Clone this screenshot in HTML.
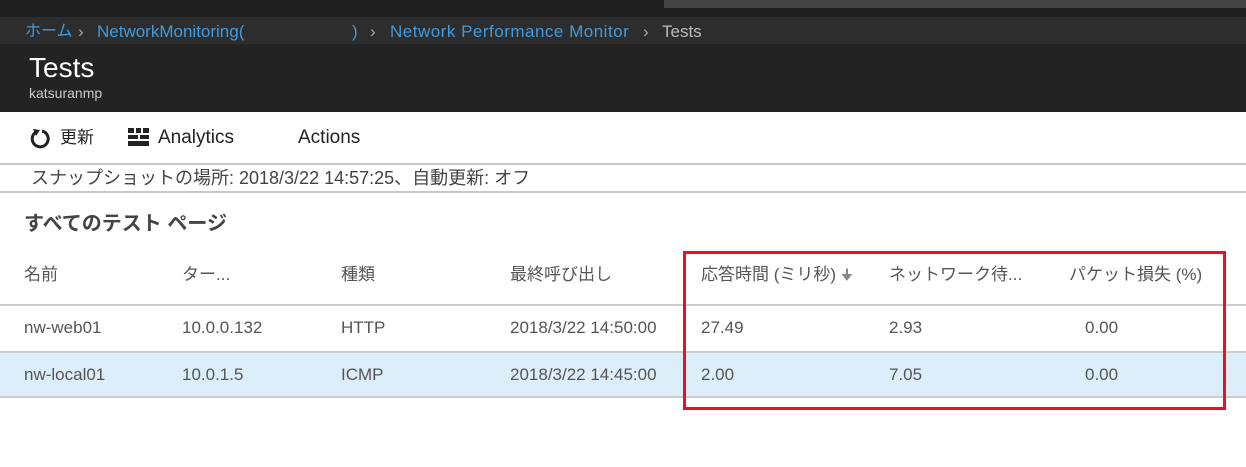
<!DOCTYPE html>
<html><head><meta charset="utf-8"><style>
*{margin:0;padding:0;box-sizing:border-box}
body{width:1246px;height:467px;background:#fff;position:relative;overflow:hidden;font-family:"Liberation Sans","Noto Sans CJK JP",sans-serif}
.a{position:absolute;white-space:nowrap;line-height:22px}
.hd{color:#555;font-size:17px;top:264px}
.c{color:#555;font-size:17px}
.b{position:absolute;top:21px;font-size:17px;line-height:22px;color:#3f9be0;white-space:nowrap}
</style></head><body>
<div class="a" style="left:0;top:0;width:1246px;height:17px;background:#1e1e1e"></div>
<div class="a" style="left:664px;top:0;width:582px;height:8px;background:#444"></div>
<div class="a" style="left:0;top:17px;width:1246px;height:27px;background:#2d2d2d"></div>
<div class="a" style="left:0;top:44px;width:1246px;height:68px;background:#232323"></div>
<div class="b" style="left:25px;font-size:16px">ホーム</div>
<div class="b" style="left:78px;color:#aaa">&#8250;</div>
<div class="b" style="left:97px">NetworkMonitoring(</div>
<div class="b" style="left:352px">)</div>
<div class="b" style="left:370px;color:#aaa">&#8250;</div>
<div class="b" style="left:390px;letter-spacing:0.5px">Network Performance Monitor</div>
<div class="b" style="left:643px;color:#aaa">&#8250;</div>
<div class="b" style="left:662px;color:#bbb">Tests</div>
<div class="a" style="left:29px;top:53px;font-size:28px;line-height:30px;color:#fff">Tests</div>
<div class="a" style="left:29px;top:82px;font-size:14px;color:#ccc">katsuranmp</div>
<svg class="a" style="left:29px;top:126px" width="22" height="24" viewBox="0 0 22 24"><path d="M7 6 A8 8 0 1 0 13 5" fill="none" stroke="#222" stroke-width="3"/><path d="M4 3 L11 4 L7 10 Z" fill="#222"/></svg>
<div class="a" style="left:60px;top:127px;font-size:17px;color:#222">更新</div>
<svg class="a" style="left:128px;top:128px" width="22" height="18"><rect x="0" y="0" width="6" height="5" fill="#222"/><rect x="8" y="0" width="5" height="5" fill="#222"/><rect x="15" y="0" width="6" height="5" fill="#222"/><rect x="0" y="7" width="10" height="4" fill="#222"/><rect x="12" y="7" width="9" height="4" fill="#222"/><rect x="0" y="13" width="21" height="5" fill="#222"/></svg>
<div class="a" style="left:158px;top:127px;font-size:19px;color:#222">Analytics</div>
<div class="a" style="left:298px;top:127px;font-size:19px;color:#222">Actions</div>
<div class="a" style="left:0;top:163px;width:1246px;height:2px;background:#c8c8c8"></div>
<div class="a" style="left:31px;top:167px;font-size:18px;color:#444">スナップショットの場所: 2018/3/22 14:57:25、自動更新: オフ</div>
<div class="a" style="left:0;top:191px;width:1246px;height:2px;background:#c8c8c8"></div>
<div class="a" style="left:24px;top:213px;font-size:20px;color:#444;font-weight:bold">すべてのテスト ページ</div>
<div class="a hd" style="left:24px">名前</div>
<div class="a hd" style="left:182px">ター...</div>
<div class="a hd" style="left:341px">種類</div>
<div class="a hd" style="left:510px">最終呼び出し</div>
<div class="a hd" style="left:701px">応答時間 (ミリ秒) <span style="color:#888;font-size:15px">&#129035;</span></div>
<div class="a hd" style="left:889px">ネットワーク待...</div>
<div class="a hd" style="left:1069px">パケット損失 (%)</div>
<div class="a" style="left:0;top:304px;width:1246px;height:2px;background:#c8cdd2"></div>
<div class="a c" style="left:24px;top:317px">nw-web01</div>
<div class="a c" style="left:182px;top:317px">10.0.0.132</div>
<div class="a c" style="left:341px;top:317px">HTTP</div>
<div class="a c" style="left:510px;top:317px">2018/3/22 14:50:00</div>
<div class="a c" style="left:701px;top:317px">27.49</div>
<div class="a c" style="left:889px;top:317px">2.93</div>
<div class="a c" style="left:1085px;top:317px">0.00</div>
<div class="a" style="left:0;top:351px;width:1246px;height:47px;background:#dbeef9;border-top:2px solid #c8cdd2;border-bottom:2px solid #c8cdd2"></div>
<div class="a c" style="left:24px;top:364px">nw-local01</div>
<div class="a c" style="left:182px;top:364px">10.0.1.5</div>
<div class="a c" style="left:341px;top:364px">ICMP</div>
<div class="a c" style="left:510px;top:364px">2018/3/22 14:45:00</div>
<div class="a c" style="left:701px;top:364px">2.00</div>
<div class="a c" style="left:889px;top:364px">7.05</div>
<div class="a c" style="left:1085px;top:364px">0.00</div>
<div class="a" style="left:683px;top:251px;width:543px;height:159px;border:3px solid #e81123"></div>
</body></html>
